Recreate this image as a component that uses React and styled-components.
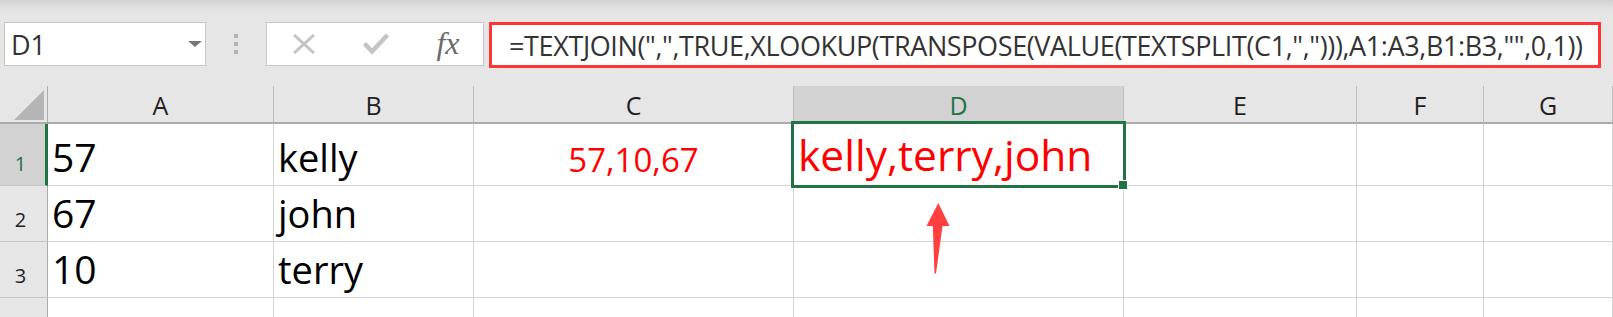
import React from 'react';
import styled, { createGlobalStyle } from 'styled-components';

const GlobalStyle = createGlobalStyle`
  html, body { margin: 0; padding: 0; background: #ffffff; }
  body { font-family: "Open Sans", "Noto Sans", sans-serif; overflow: hidden; }
  #root { width: 1613px; height: 317px; overflow: hidden; }
`;

const Screen = styled.div`
  position: relative;
  width: 1613px;
  height: 317px;
  display: flex;
  flex-direction: column;
  overflow: hidden;
  background: #ffffff;
`;

/* ---------- formula bar ---------- */
const FormulaBar = styled.div`
  flex: none;
  height: 86px;
  box-sizing: border-box;
  padding: 22px 0 0 4px;
  display: flex;
  align-items: flex-start;
  background: linear-gradient(#d2d2d2 0px, #e1e1e1 8px, #e6e6e6 14px);
`;

const NameBox = styled.div`
  width: 202px;
  height: 44px;
  box-sizing: border-box;
  border: 1px solid #c6c6c6;
  background: #ffffff;
  display: flex;
  align-items: center;
  justify-content: space-between;
  padding: 0 3px 0 6px;
  font-size: 27px;
  line-height: 1;
  color: #333333;
`;

const Caret = styled.span`
  width: 0;
  height: 0;
  border-left: 7px solid transparent;
  border-right: 7px solid transparent;
  border-top: 6px solid #777777;
  margin-top: -1px;
`;

const Grip = styled.div`
  margin: 12px 0 0 28px;
  display: flex;
  flex-direction: column;
  gap: 4px;
`;

const GripDot = styled.span`
  width: 4px;
  height: 4px;
  background: #b3b3b3;
`;

const FunctionBox = styled.div`
  margin-left: 28px;
  width: 218px;
  height: 44px;
  box-sizing: border-box;
  border: 1px solid #c6c6c6;
  background: #ffffff;
  display: grid;
  grid-template-columns: repeat(3, 72px);
  align-items: center;
  justify-items: center;
  padding-left: 1px;
`;

const FxLabel = styled.span`
  font-family: "Liberation Serif", "Times New Roman", serif;
  font-style: italic;
  font-size: 32px;
  line-height: 1;
  color: #6b6b6b;
  margin-top: -2px;
`;

const FormulaInput = styled.div`
  margin-left: 5px;
  width: 1112px;
  height: 46px;
  box-sizing: border-box;
  border: 3px solid #ff3535;
  background: #ffffff;
  display: flex;
  align-items: center;
  padding-left: 17px;
  font-size: 27px;
  letter-spacing: -0.38px;
  line-height: 1;
  color: #333333;
  white-space: nowrap;
  overflow: hidden;
`;

/* ---------- sheet ---------- */
const Sheet = styled.div`
  flex: 1;
  display: grid;
  grid-template-columns: 48px 226px 200px 320px 330px 233px 127px 129px;
  grid-template-rows: 38px 62px 56px 56px 56px;
`;

const Corner = styled.div`
  box-sizing: border-box;
  background: #e6e6e6;
  border-right: 1px solid #ababab;
  border-bottom: 2px solid #ababab;
  display: flex;
  align-items: flex-end;
  justify-content: flex-end;
  padding: 0 3px 2px 0;
`;

const ColHeader = styled.div`
  box-sizing: border-box;
  background: ${p => (p.$active ? '#d2d2d2' : '#e6e6e6')};
  color: ${p => (p.$active ? '#217346' : '#1f1f1f')};
  border-right: 1px solid #bfbfbf;
  border-bottom: 2px solid #ababab;
  display: flex;
  align-items: flex-end;
  justify-content: center;
  padding-bottom: 4px;
  font-size: 25px;
  line-height: 1;
`;

const RowHeader = styled.div`
  box-sizing: border-box;
  background: ${p => (p.$active ? '#d2d2d2' : '#e6e6e6')};
  color: ${p => (p.$active ? '#217346' : '#1f1f1f')};
  border-right: ${p => (p.$active ? '3px solid #217346' : '1px solid #ababab')};
  border-bottom: 1px solid #c6c6c6;
  display: flex;
  align-items: flex-end;
  justify-content: center;
  padding: 0 ${p => (p.$active ? 4 : 6)}px 11px 0;
  font-size: 20px;
  line-height: 1;
`;

const Cell = styled.div`
  position: relative;
  box-sizing: border-box;
  min-width: 0;
  background: #ffffff;
  border-right: 1px solid #d4d4d4;
  border-bottom: 1px solid #d4d4d4;
  display: flex;
  align-items: flex-end;
  justify-content: ${p => (p.$align === 'center' ? 'center' : 'flex-start')};
  padding: 0 4px 9px 4px;
  font-size: ${p => p.$size || 38}px;
  line-height: 1;
  color: ${p => p.$color || '#000000'};
  white-space: nowrap;
`;

const Selection = styled.span`
  position: absolute;
  top: -3px;
  left: -3px;
  right: -3px;
  bottom: -3px;
  border: 3px solid #217346;
  pointer-events: none;
  z-index: 2;
`;

const FillHandle = styled.span`
  position: absolute;
  right: -5px;
  bottom: -5px;
  width: 8px;
  height: 8px;
  background: #217346;
  border: 1px solid #ffffff;
  z-index: 3;
`;

const Arrow = styled.svg`
  position: absolute;
  left: 920px;
  top: 198px;
  z-index: 4;
`;

const XIcon = () => (
  <svg width="24" height="20" viewBox="0 0 24 20">
    <path d="M2 1 L22 19 M22 1 L2 19" stroke="#c4c4c4" strokeWidth="3" fill="none" />
  </svg>
);

const CheckIcon = () => (
  <svg width="28" height="22" viewBox="0 0 28 22">
    <path d="M2.5 10.5 L10 18.5 L25.5 2" stroke="#c4c4c4" strokeWidth="4.5" fill="none" strokeLinejoin="miter" />
  </svg>
);

const CornerTriangle = () => (
  <svg width="30" height="30" viewBox="0 0 30 30">
    <polygon points="30,0 30,30 0,30" fill="#b5b5b5" />
  </svg>
);

const columns = ['A', 'B', 'C', 'D', 'E', 'F', 'G'];

const rows = [
  {
    label: '1',
    cells: [
      { text: '57', size: 39 },
      { text: 'kelly' },
      { text: '57,10,67', align: 'center', color: '#ff0000', size: 33 },
      { text: 'kelly,terry,john', color: '#ff0000', size: 42.5, selected: true },
      {}, {}, {},
    ],
  },
  { label: '2', cells: [{ text: '67', size: 39 }, { text: 'john' }, {}, {}, {}, {}, {}] },
  { label: '3', cells: [{ text: '10', size: 39 }, { text: 'terry' }, {}, {}, {}, {}, {}] },
  { label: '', cells: [{}, {}, {}, {}, {}, {}, {}] },
];

const formula = '=TEXTJOIN(",",TRUE,XLOOKUP(TRANSPOSE(VALUE(TEXTSPLIT(C1,","))),A1:A3,B1:B3,"",0,1))';

export default function App() {
  return (
    <Screen>
      <GlobalStyle />
      <FormulaBar>
        <NameBox>
          <span>D1</span>
          <Caret />
        </NameBox>
        <Grip>
          <GripDot />
          <GripDot />
          <GripDot />
        </Grip>
        <FunctionBox>
          <XIcon />
          <CheckIcon />
          <FxLabel>fx</FxLabel>
        </FunctionBox>
        <FormulaInput>{formula}</FormulaInput>
      </FormulaBar>

      <Sheet>
        <Corner>
          <CornerTriangle />
        </Corner>
        {columns.map(c => (
          <ColHeader key={c} $active={c === 'D'}>{c}</ColHeader>
        ))}
        {rows.map((row, r) => (
          <React.Fragment key={r}>
            <RowHeader $active={r === 0}>{row.label}</RowHeader>
            {row.cells.map((cell, c) => (
              <Cell
                key={c}
                $align={cell.align}
                $color={cell.color}
                $size={cell.size}
              >
                {cell.text}
                {cell.selected && (
                  <>
                    <Selection />
                    <FillHandle />
                  </>
                )}
              </Cell>
            ))}
          </React.Fragment>
        ))}
      </Sheet>

      <Arrow width="40" height="80" viewBox="920 198 40 80">
        <polygon
          points="938.3,203 949.5,226 942.5,226 936,273.5 934.5,273.5 932.8,226 926.5,226"
          fill="#ff4040"
        />
      </Arrow>
    </Screen>
  );
}
